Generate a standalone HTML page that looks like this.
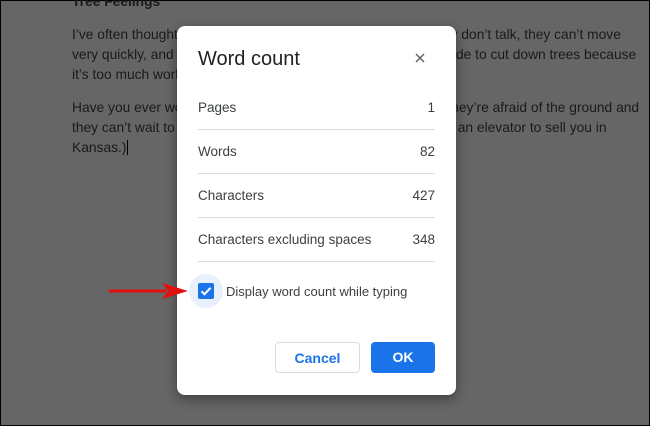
<!DOCTYPE html>
<html><head><style>
body{margin:0;width:650px;height:426px;overflow:hidden;background:#666;font-family:"Liberation Sans",Arial,sans-serif;position:relative}
.frame{position:absolute;left:0;top:0;width:648px;height:424px;border:1px solid #000}
.doc{position:absolute;left:72px;color:#1a1a1a;font-size:13.8px;white-space:nowrap}
.dlg{position:absolute;left:177px;top:26px;width:279px;height:369px;background:#fff;border-radius:8px;box-shadow:0 4px 12px rgba(0,0,0,.4)}
.t{position:absolute;left:21px;top:22px;font-size:20px;color:#202124}
.row{position:absolute;left:21px;width:237px;height:44px;font-size:13.5px;color:#3c4043;border-bottom:1px solid #dadce0;box-sizing:border-box}
.row span{position:absolute;top:14px}
.row b{position:absolute;right:0;top:14px;font-weight:normal}
.btn{position:absolute;top:316px;height:31px;border-radius:4px;font-size:14px;font-weight:bold;text-align:center;line-height:31px;box-sizing:border-box}
</style></head><body>
<div class="frame"></div>
<div class="doc" style="top:-6px;font-weight:bold">Tree Feelings</div>
<div class="doc" style="top:27px">I’ve often thought about trees. They live long lives, and yet they don’t talk, they can’t move</div>
<div class="doc" style="top:47px">very quickly, and nobody notices them. Sometimes people decide to cut down trees because</div>
<div class="doc" style="top:67px">it’s too much work.</div>
<div class="doc" style="top:100px">Have you ever wondered why trees grow tall? Maybe it's that they’re afraid of the ground and</div>
<div class="doc" style="top:120px">they can’t wait to get away from it. (Or maybe they are building an elevator to sell you in</div>
<div class="doc" style="top:140px">Kansas.)<span style="border-left:1px solid #000;margin-left:1px"></span></div>
<div class="dlg">
<div class="t">Word count</div>
<svg style="position:absolute;left:238px;top:27px" width="10" height="10"><path d="M1 1L9 9M9 1L1 9" stroke="#5f6368" stroke-width="1.5"/></svg>
<div class="row" style="top:60px"><span>Pages</span><b>1</b></div>
<div class="row" style="top:104px"><span>Words</span><b>82</b></div>
<div class="row" style="top:148px"><span>Characters</span><b>427</b></div>
<div class="row" style="top:192px"><span>Characters excluding spaces</span><b>348</b></div>
<div style="position:absolute;left:12px;top:248px;width:34px;height:34px;border-radius:50%;background:#e8f0fe"></div>
<div style="position:absolute;left:21px;top:257px;width:16px;height:16px;border-radius:2px;background:#1a73e8"></div>
<svg style="position:absolute;left:21px;top:257px" width="16" height="16"><path d="M3.5 8.3L6.5 11.2L12.5 4.8" stroke="#fff" stroke-width="2" fill="none"/></svg>
<div style="position:absolute;left:49px;top:258px;font-size:13px;color:#3c4043">Display word count while typing</div>
<div class="btn" style="left:98px;width:85px;border:1px solid #dadce0;color:#1a73e8">Cancel</div>
<div class="btn" style="left:194px;width:64px;background:#1a73e8;color:#fff">OK</div>
</div>
<svg style="position:absolute;left:106px;top:281px" width="84" height="20"><path d="M3 10H60" stroke="#e01010" stroke-width="3"/><path d="M56 2L82 10L56 18L62 10Z" fill="#e01010"/></svg>
</body></html>
